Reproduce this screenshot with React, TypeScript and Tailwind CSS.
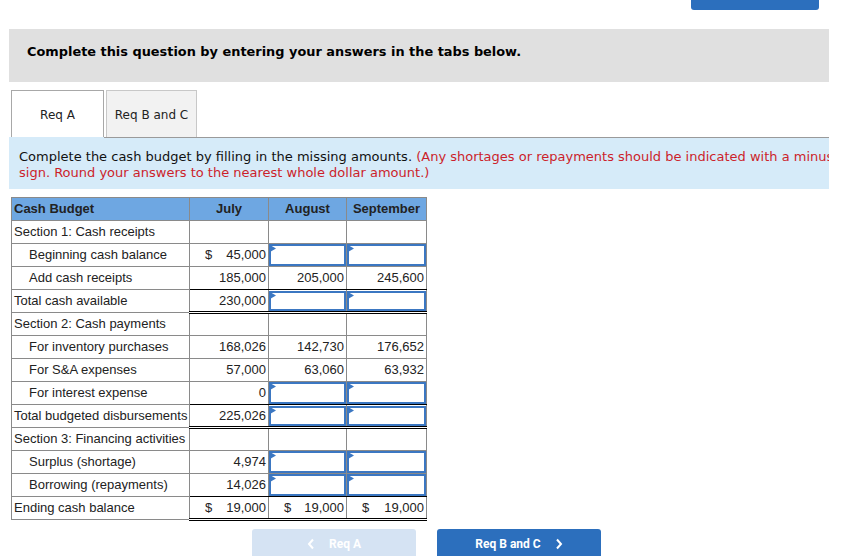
import React from "react";

type Cell = { v?: string; dollar?: boolean; input?: boolean };
type Row = {
  label: string;
  indent?: boolean;
  cells: Cell[];
  topBlack?: boolean;
  double?: boolean;
};

const E: Cell = {};
const I: Cell = { input: true };

const rows: Row[] = [
  { label: "Section 1: Cash receipts", cells: [E, E, E] },
  { label: "Beginning cash balance", indent: true, cells: [{ v: "45,000", dollar: true }, I, I] },
  { label: "Add cash receipts", indent: true, topBlack: true, cells: [{ v: "185,000" }, { v: "205,000" }, { v: "245,600" }] },
  { label: "Total cash available", double: true, cells: [{ v: "230,000" }, I, I] },
  { label: "Section 2: Cash payments", cells: [E, E, E] },
  { label: "For inventory purchases", indent: true, cells: [{ v: "168,026" }, { v: "142,730" }, { v: "176,652" }] },
  { label: "For S&A expenses", indent: true, cells: [{ v: "57,000" }, { v: "63,060" }, { v: "63,932" }] },
  { label: "For interest expense", indent: true, topBlack: true, cells: [{ v: "0" }, I, I] },
  { label: "Total budgeted disbursements", double: true, cells: [{ v: "225,026" }, I, I] },
  { label: "Section 3: Financing activities", cells: [E, E, E] },
  { label: "Surplus (shortage)", indent: true, cells: [{ v: "4,974" }, I, I] },
  { label: "Borrowing (repayments)", indent: true, topBlack: true, cells: [{ v: "14,026" }, I, I] },
  { label: "Ending cash balance", double: true, cells: [{ v: "19,000", dollar: true }, { v: "19,000", dollar: true }, { v: "19,000", dollar: true }] },
];

function InputBox({ short }: { short?: boolean }) {
  return (
    <div className={`relative w-full border-2 border-[#3b77c2] bg-white ${short ? "h-[20px]" : "h-[22px]"}`}>
      <svg className="absolute left-[-1px] top-[-1px]" width="6" height="8" viewBox="0 0 6 8">
        <polygon points="0,0 6,3.5 0,7" fill="#3b77c2" />
      </svg>
    </div>
  );
}

const verdanaish = { fontFamily: "'DejaVu Sans', Verdana, sans-serif" };

export default function App() {
  return (
    <div className="w-[853px] h-[556px] overflow-hidden bg-white relative" style={{ fontFamily: "'Liberation Sans', Arial, sans-serif" }}>
      {/* top cut button */}
      <div className="flex pl-[691px]">
        <div className="h-[10px] w-[128px] rounded-b-[3px] bg-[#2c6fbd]" />
      </div>

      <div className="mx-[9px] w-[820px]">
        {/* gray instruction box */}
        <div className="mt-[19px] h-[53px] bg-[#e0e0e0] pl-[18px] pt-[13px] text-[12.9px] font-bold text-black" style={verdanaish}>
          Complete this question by entering your answers in the tabs below.
        </div>

        {/* tabs */}
        <div className="mt-[8px] flex items-end pl-[2px] text-[12px] text-[#222]" style={verdanaish}>
          <div className="h-[47px] w-[93px] border border-b-0 border-[#a8a8a8] bg-white flex items-center justify-center pt-[2px]">Req A</div>
          <div className="ml-[2px] h-[47px] w-[91px] border border-b-0 border-[#c8c8c8] bg-[#f2f2f2] flex items-center justify-center pt-[2px]">Req B and C</div>
          <div className="flex-1" />
        </div>
        <div className="flex">
          <div className="w-[95px] h-px bg-[#d6ebf9]" />
          <div className="flex-1 h-px bg-[#9a9a9a]" />
        </div>

        {/* blue instruction box */}
        <div className="h-[51px] bg-[#d6ebf9] overflow-hidden pl-[10px] pt-[11px] text-[13px] leading-[16px]" style={verdanaish}>
          <div className="w-[830px] text-[#111]">
            Complete the cash budget by filling in the missing amounts.{" "}
            <span className="text-[#cc1f2b]">
              (Any shortages or repayments should be indicated with a minus sign. Round your answers to the nearest whole dollar amount.)
            </span>
          </div>
        </div>

        {/* table */}
        <table className="mt-[8px] ml-[2px] border-collapse text-[13px] text-[#222] table-fixed">
          <colgroup>
            <col style={{ width: 178 }} />
            <col style={{ width: 79 }} />
            <col style={{ width: 78 }} />
            <col style={{ width: 80 }} />
          </colgroup>
          <thead>
            <tr className="h-[23px] bg-[#6ea7e2] font-bold">
              <td className="border border-[#8a8a8a] px-[2px] text-left">Cash Budget</td>
              <td className="border border-[#8a8a8a] text-center">July</td>
              <td className="border border-[#8a8a8a] text-center">August</td>
              <td className="border border-[#8a8a8a] text-center">September</td>
            </tr>
          </thead>
          <tbody>
            {rows.map((r, i) => (
              <tr key={i} className="h-[23px]">
                <td className={`border border-[#8a8a8a] whitespace-nowrap p-0 ${r.indent ? "pl-[17px]" : "pl-[2px]"}`}>{r.label}</td>
                {r.cells.map((c, j) => {
                  const cls = r.double
                    ? "border-x border-x-[#8a8a8a]"
                    : r.topBlack
                    ? "border border-[#8a8a8a] border-b-black"
                    : "border border-[#8a8a8a]";
                  return (
                    <td
                      key={j}
                      className={`${cls} p-0 align-middle`}
                      style={r.double ? { borderBottom: "3px double #000", borderTop: "1px solid #000" } : undefined}
                    >
                      {c.input ? (
                        <InputBox short={r.double} />
                      ) : c.v !== undefined ? (
                        <div className="flex justify-between px-[2px]">
                          <span className="pl-[13px]">{c.dollar ? "$" : ""}</span>
                          <span>{c.v}</span>
                        </div>
                      ) : null}
                    </td>
                  );
                })}
              </tr>
            ))}
          </tbody>
        </table>
      </div>

      {/* bottom nav */}
      <div className="mt-[8px] flex justify-center gap-[21px]" style={{ fontFamily: "Roboto, 'Liberation Sans', sans-serif" }}>
        <div className="h-[30px] w-[164px] rounded-t-[3px] bg-[#d5e3f3] text-white text-[12px] font-bold flex items-center justify-center gap-[14px]">
          <svg width="8" height="12" viewBox="0 0 8 12" fill="none" stroke="white" strokeWidth="2">
            <polyline points="6,1.5 2,6 6,10.5" />
          </svg>
          <span>Req A</span>
        </div>
        <div className="h-[30px] w-[164px] rounded-t-[3px] bg-[#2c6fbd] text-white text-[12px] font-bold flex items-center justify-center gap-[14px]">
          <span>Req B and C</span>
          <svg width="8" height="12" viewBox="0 0 8 12" fill="none" stroke="white" strokeWidth="2">
            <polyline points="2,1.5 6,6 2,10.5" />
          </svg>
        </div>
      </div>
    </div>
  );
}
